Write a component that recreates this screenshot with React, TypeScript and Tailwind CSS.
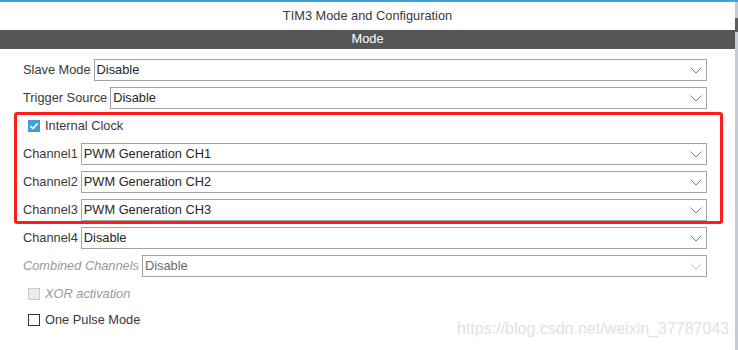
import React from "react";

const Chevron = ({ light }: { light?: boolean }) => (
  <svg width="12" height="7" viewBox="0 0 12 7" className="shrink-0">
    <path d="M0.5 0.5 L6 6 L11.5 0.5" fill="none" stroke={light ? "#c8c8c8" : "#7a7a7a"} strokeWidth="1" />
  </svg>
);

const Select = ({ value, disabled }: { value: string; disabled?: boolean }) => (
  <div className="flex-1 h-[22px] flex items-center border border-[#a3a3a3] bg-white pl-[2px] pr-[4px]">
    <span className={`flex-1 ${disabled ? "text-[#6a6a6a]" : "text-[#262626]"}`}>{value}</span>
    <Chevron light={disabled} />
  </div>
);

const Row = ({ label, value, disabled }: { label: string; value: string; disabled?: boolean }) => (
  <div className="h-[22px] flex items-center gap-[3px]">
    <span className={disabled ? "italic text-[#9a9a9a]" : "text-[#3a3a3a]"}>{label}</span>
    <Select value={value} disabled={disabled} />
  </div>
);

const Check = ({ label, state }: { label: string; state: "checked" | "disabled" | "off" }) => (
  <div className="h-[22px] flex items-center pl-[5px] gap-[5px]">
    {state === "checked" ? (
      <div className="w-[12px] h-[12px] bg-[#3c9fe0] flex items-center justify-center">
        <svg width="10" height="10" viewBox="0 0 10 10">
          <path d="M1.5 5.2 L4 7.6 L8.6 2.4" fill="none" stroke="#ffffff" strokeWidth="1.6" />
        </svg>
      </div>
    ) : state === "disabled" ? (
      <div className="w-[12px] h-[12px] bg-[#ececec] border border-[#c9c9c9]" />
    ) : (
      <div className="w-[12px] h-[12px] bg-white border border-[#333333]" />
    )}
    <span className={state === "disabled" ? "italic text-[#9a9a9a]" : "text-[#3a3a3a]"}>{label}</span>
  </div>
);

export default function App() {
  return (
    <div
      className="w-[738px] h-[350px] bg-white relative overflow-hidden text-[12.8px] leading-none"
      style={{ fontFamily: '"Liberation Sans", Arial, sans-serif' }}
    >
      <div className="h-[2px] bg-[#3ca3dd]" />
      <div className="flex h-[348px]">
        <div className="w-[735px] flex flex-col">
          <div className="h-[28px] flex items-center justify-center text-[#3a3a3a] text-[12.8px]">
            TIM3 Mode and Configuration
          </div>
          <div className="h-[19px] bg-[#545554] flex items-center justify-center text-white text-[12.8px]">
            Mode
          </div>
          <div className="flex flex-col gap-[6px] pt-[10px] pl-[23px] pr-[28px]">
            <Row label="Slave Mode" value="Disable" />
            <Row label="Trigger Source" value="Disable" />
            <div className="-mx-[9px] -mr-[16px] -my-[3px] border-[3px] border-[#ff1c1c] rounded-[3px] pl-[6px] pr-[13px] flex flex-col gap-[6px]">
              <Check label="Internal Clock" state="checked" />
              <Row label="Channel1" value="PWM Generation CH1" />
              <Row label="Channel2" value="PWM Generation CH2" />
              <Row label="Channel3" value="PWM Generation CH3" />
            </div>
            <Row label="Channel4" value="Disable" />
            <Row label="Combined Channels" value="Disable" disabled />
            <Check label="XOR activation" state="disabled" />
            <div className="-mt-[2px]">
              <Check label="One Pulse Mode" state="off" />
            </div>
          </div>
        </div>
        <div className="w-[3px] flex flex-col bg-[#c6cdd2]">
          <div className="h-[16px]" />
          <div className="h-[14px] bg-[#5e5e5e]" />
        </div>
      </div>
      <div className="absolute left-[457px] top-[321px] text-[16px] text-[#e2e2e2] leading-none whitespace-nowrap">
        https://blog.csdn.net/weixin_37787043
      </div>
    </div>
  );
}
